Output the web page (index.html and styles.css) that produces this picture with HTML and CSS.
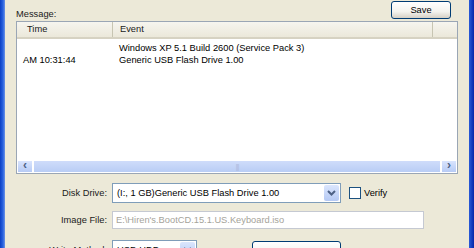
FILE: index.html
```html
<!DOCTYPE html>
<html>
<head>
<meta charset="utf-8">
<link rel="stylesheet" href="styles.css">
</head>
<body>
<div class="window">
  <div class="frame-left"></div>
  <div class="main">
    <div class="top-row">
      <span class="label-msg">Message:</span>
      <button class="btn save">Save</button>
    </div>
    <div class="listview">
      <div class="lv-header">
        <div class="col-time">Time</div>
        <div class="col-event">Event</div>
        <div class="col-rest"></div>
      </div>
      <div class="lv-body">
        <div class="lv-row">
          <div class="cell-time"></div>
          <div class="cell-event">Windows XP 5.1 Build 2600 (Service Pack 3)</div>
        </div>
        <div class="lv-row">
          <div class="cell-time">AM 10:31:44</div>
          <div class="cell-event">Generic USB Flash Drive 1.00</div>
        </div>
      </div>
      <div class="hscroll">
        <div class="sb-btn">&lsaquo;</div>
        <div class="sb-thumb"><span class="grip">|||</span></div>
        <div class="sb-btn">&rsaquo;</div>
      </div>
    </div>
    <div class="form">
      <div class="flabel">Disk Drive:</div>
      <div class="frow">
        <div class="combo wide">
          <span class="combo-text">(I:, 1 GB)Generic USB Flash Drive 1.00</span>
          <span class="combo-btn"><svg width="9" height="6" viewBox="0 0 9 6"><path d="M1 1 L4.5 4.5 L8 1" fill="none" stroke="#4d6185" stroke-width="2"/></svg></span>
        </div>
        <label class="check"><span class="box"></span>Verify</label>
      </div>
      <div class="flabel">Image File:</div>
      <div class="frow">
        <div class="textbox">E:\Hiren's.BootCD.15.1.US.Keyboard.iso</div>
      </div>
      <div class="flabel">Write Method:</div>
      <div class="frow">
        <div class="combo narrow">
          <span class="combo-text">USB-HDD</span>
          <span class="combo-btn"><svg width="9" height="6" viewBox="0 0 9 6"><path d="M1 1 L4.5 4.5 L8 1" fill="none" stroke="#4d6185" stroke-width="2"/></svg></span>
        </div>
        <button class="btn write">Write</button>
      </div>
    </div>
  </div>
  <div class="frame-right"></div>
</div>
</body>
</html>
```
FILE: styles.css
```css
html, body {
  margin: 0;
  padding: 0;
  width: 474px;
  height: 248px;
  overflow: hidden;
  font-family: "Liberation Sans", Arial, sans-serif;
  font-size: 9.3px;
  color: #000;
}
.window {
  display: flex;
  width: 474px;
  height: 248px;
  background: #ece9d8;
  overflow: hidden;
}
.frame-left {
  width: 5px;
  flex-shrink: 0;
  background: linear-gradient(to right, #0b3fc4, #2a64e0 60%, #6f95e6);
}
.frame-right {
  width: 5px;
  flex-shrink: 0;
  background: linear-gradient(to right, #2a5bd8, #0626a8);
}
.main {
  flex: 1;
  padding: 0 11px;
  display: flex;
  flex-direction: column;
  overflow: hidden;
}
.top-row {
  display: flex;
  justify-content: space-between;
  align-items: flex-end;
  height: 21px;
  flex-shrink: 0;
}
.label-msg {
  padding-bottom: 2px;
  color: #1a1a1a;
}
.btn {
  font-family: "Liberation Sans", Arial, sans-serif;
  font-size: 9.3px;
  border: 1px solid #003c74;
  border-radius: 3px;
  background: linear-gradient(to bottom, #ffffff, #f4f3ee 60%, #d6d0c5);
  padding: 0;
  color: #000;
}
.save {
  width: 60px;
  height: 18px;
  margin-right: 7px;
  margin-bottom: 2px;
}
.listview {
  height: 153px;
  flex-shrink: 0;
  border: 1px solid #9aa6b5;
  background: #fff;
  display: flex;
  flex-direction: column;
  box-sizing: border-box;
}
.lv-header {
  display: flex;
  height: 17px;
  flex-shrink: 0;
  background: linear-gradient(to bottom, #f6f5ef, #ebe8da);
  border-bottom: 2px solid #d6d2c2;
  box-sizing: border-box;
  line-height: 15px;
  color: #1a1a1a;
}
.col-time {
  width: 96px;
  padding-left: 10px;
  box-sizing: border-box;
  border-right: 1px solid #c7c5b2;
}
.col-event {
  width: 320px;
  padding-left: 7px;
  box-sizing: border-box;
  border-right: 1px solid #c7c5b2;
}
.col-rest { flex: 1; }
.lv-body {
  flex: 1;
  padding-top: 3px;
}
.lv-row {
  display: flex;
  height: 12px;
  line-height: 12px;
}
.cell-time {
  width: 96px;
  padding-left: 6px;
  box-sizing: border-box;
}
.cell-event {
  padding-left: 6px;
  white-space: nowrap;
}
.hscroll {
  display: flex;
  height: 13px;
  flex-shrink: 0;
  background: #eef1f9;
}
.sb-btn {
  width: 16px;
  background: linear-gradient(to bottom, #d9e4fd, #b7cbf5);
  border: 1px solid #fff;
  box-sizing: border-box;
  color: #4d6185;
  font-weight: bold;
  font-size: 12px;
  line-height: 9px;
  text-align: center;
}
.sb-thumb {
  flex: 1;
  background: linear-gradient(to bottom, #cfdcfa, #b9cdf5);
  border: 1px solid #fff;
  box-sizing: border-box;
  display: flex;
  justify-content: center;
  align-items: center;
}
.grip {
  color: #aebde0;
  font-size: 8px;
  letter-spacing: -1px;
}
.form {
  display: grid;
  grid-template-columns: 91px 1fr;
  column-gap: 5px;
  row-gap: 8px;
  margin-top: 9px;
  align-items: center;
  flex-shrink: 0;
}
.flabel {
  text-align: right;
  color: #1a1a1a;
}
.frow {
  display: flex;
  align-items: center;
}
.combo {
  height: 20px;
  border: 1px solid #7f9db9;
  background: #fff;
  display: flex;
  align-items: center;
  box-sizing: border-box;
  padding: 1px;
}
.combo.wide { width: 229px; }
.combo.narrow { width: 85px; }
.combo-text {
  flex: 1;
  padding-left: 3px;
  white-space: nowrap;
  overflow: hidden;
}
.combo-btn {
  width: 15px;
  height: 16px;
  border-radius: 2px;
  background: linear-gradient(to bottom, #dbe6fd, #b5c9f4);
  display: flex;
  align-items: center;
  justify-content: center;
}
.check {
  display: flex;
  align-items: center;
  margin-left: 8px;
}
.box {
  width: 10px;
  height: 10px;
  border: 1px solid #1c5180;
  background: #fff;
  margin-right: 3px;
}
.textbox {
  width: 312px;
  height: 18px;
  line-height: 16px;
  border: 1px solid #c5c9d2;
  background: #fff;
  box-sizing: border-box;
  padding-left: 3px;
  color: #a5a39a;
  white-space: nowrap;
}
.write {
  width: 89px;
  height: 22px;
  margin-left: 55px;
  margin-top: 4px;
}
```
